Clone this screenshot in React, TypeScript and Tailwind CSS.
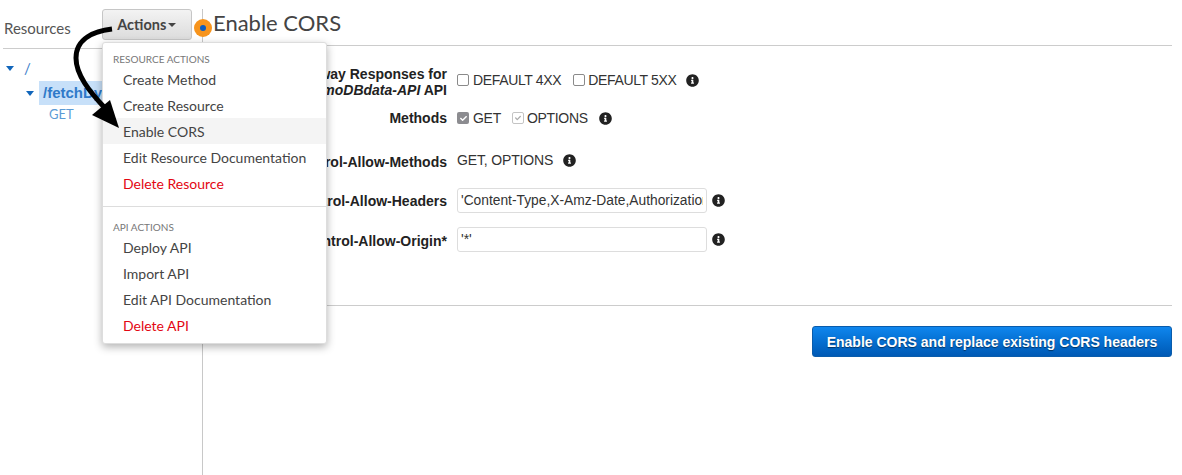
import { FC, ReactNode } from 'react'
import { FaInfoCircle, FaCheck } from 'react-icons/fa'

const helv = 'font-["Liberation_Sans",Arial,sans-serif]'

const Caret: FC = () => (
  <span className="w-0 h-0 border-x-[4.5px] border-x-transparent border-t-[5px] border-t-[#1166bb]" />
)

const Info: FC<{ className: string }> = ({ className }) => (
  <FaInfoCircle className={`text-[#222] w-[13px] h-[13px] shrink-0 ${className}`} />
)

const Box: FC<{ state?: 'off' | 'dark' | 'light'; className?: string }> = ({ state = 'off', className = '' }) => {
  if (state === 'dark') {
    return (
      <span className={`w-[12px] h-[12px] rounded-[2px] bg-[#8c8c90] flex items-center justify-center ${className}`}>
        <FaCheck className="text-white w-[7px] h-[7px]" />
      </span>
    )
  }
  if (state === 'light') {
    return (
      <span className={`w-[12px] h-[12px] rounded-[2px] border border-[#c4c4c4] bg-white flex items-center justify-center ${className}`}>
        <FaCheck className="text-[#aaa] w-[6px] h-[6px]" />
      </span>
    )
  }
  return <span className={`block w-[12px] h-[12px] rounded-[2px] border border-[#8a8a8a] bg-white ${className}`} />
}

type RowProps = {
  label: ReactNode
  className: string
  labelClass?: string
  controlClass?: string
  children: ReactNode
}

const Row: FC<RowProps> = ({ label, className, labelClass = '', controlClass = '', children }) => (
  <div className={`flex items-center ${className}`}>
    <div className={`w-[244px] text-right font-bold text-[14px] leading-[16px] text-[#222] whitespace-nowrap ${labelClass}`}>{label}</div>
    <div className={`ml-[10px] flex items-center text-[14px] text-[#333] ${controlClass}`}>{children}</div>
  </div>
)

const MenuItem: FC<{ text: string; danger?: boolean; active?: boolean }> = ({ text, danger, active }) => (
  <div className={`h-[26px] pl-[20px] flex items-center text-[14px] ${danger ? 'text-[#e30613]' : 'text-[#444]'} ${active ? 'bg-[#f4f4f4]' : ''}`}>
    {text}
  </div>
)

const MenuHead: FC<{ text: string }> = ({ text }) => (
  <div className="h-[16px] pl-[10px] pt-[2px] flex items-center text-[10px] text-[#777]">{text}</div>
)

const App: FC = () => {
  return (
    <div className={`relative w-[1182px] h-[475px] overflow-hidden bg-white flex ${helv}`}>
      <aside className="mt-[9px] w-[203px] h-[466px] shrink-0 border-r border-[#c8c8c8] font-['Lato',sans-serif]">
        <div className="ml-[3px] h-[40px] border-b border-[#ccc] flex items-start">
          <span className="ml-px mt-[10px] text-[15px] leading-[18px] text-[#555]">Resources</span>
          <button className="ml-[31px] w-[90px] h-[31px] rounded-[3px] border border-[#c6c6c6] bg-gradient-to-b from-[#f3f3f3] to-[#dcdcdc] flex items-center justify-center gap-[2px] text-[14.5px] font-bold text-[#444]">
            Actions
            <span className="w-0 h-0 border-x-[4px] border-x-transparent border-t-[4px] border-t-[#444]" />
          </button>
        </div>
        <div className="mt-[11px] pl-[6px] flex items-center h-[16px]">
          <Caret />
          <span className="ml-[10px] text-[15px] text-[#3f7fcb]">/</span>
        </div>
        <div className="mt-[5px] pl-[26px] flex items-center h-[24px]">
          <Caret />
          <span className={`ml-[5px] h-[24px] w-[63px] bg-[#c7e0f9] pl-[4px] flex items-center font-bold text-[15px] text-[#2f7ac9] whitespace-nowrap ${helv}`}>
            /fetchDy
          </span>
        </div>
        <div className="mt-[1px] pl-[49px] text-[13px] leading-[16px] text-[#5b9bd5]">GET</div>
      </aside>

      <main className="flex-1 pr-[10px]">
        <div className="h-[46px] border-b border-[#ccc] pl-[10px] font-['Lato',sans-serif] text-[22px] leading-[46px] text-[#444]">
          Enable CORS
        </div>

        <Row
          className="mt-[20px] h-[32px]"
          controlClass="mb-[4px]"
          label={<>Gateway Responses for<br /><i>DynamoDBdata-API</i> API</>}
        >
          <Box />
          <span className="ml-[4px] tracking-[-0.35px]">DEFAULT 4XX</span>
          <Box className="ml-[12px]" />
          <span className="ml-[3px] tracking-[-0.35px]">DEFAULT 5XX</span>
          <Info className="ml-[10px]" />
        </Row>
        <Row className="mt-[12px] h-[16px]" label="Methods">
          <Box state="dark" />
          <span className="ml-[4px] tracking-[-0.3px]">GET</span>
          <Box state="light" className="ml-[11px]" />
          <span className="ml-[3px] tracking-[-0.3px]">OPTIONS</span>
          <Info className="ml-[11px]" />
        </Row>
        <Row className="mt-[26px] h-[16px]" labelClass="pt-[4px]" label="Access-Control-Allow-Methods">
          <span className="tracking-[-0.15px]">GET, OPTIONS</span>
          <Info className="ml-[10px]" />
        </Row>
        <Row className="mt-[19px] h-[26px]" labelClass="pt-[2px]" label="Access-Control-Allow-Headers">
          <input
            readOnly
            value="'Content-Type,X-Amz-Date,Authorization,X-Api-Key,X-Amz-Security-Token'"
            className="w-[250px] h-[25px] rounded-[3px] border border-[#ddd] px-[3px] text-[13.8px] text-[#333] outline-none"
          />
          <Info className="ml-[5px]" />
        </Row>
        <Row className="mt-[13px] h-[26px]" labelClass="pt-[4px]" label="Access-Control-Allow-Origin*">
          <input
            readOnly
            value="'*'"
            className="w-[250px] h-[25px] rounded-[3px] border border-[#ddd] px-[3px] text-[14px] text-[#333] outline-none"
          />
          <Info className="ml-[5px]" />
        </Row>

        <div className="mt-[53px] border-t border-[#ccc] pt-[20px] flex justify-end">
          <button className="w-[360px] h-[31px] pt-px rounded-[3px] border border-[#0a5cab] bg-gradient-to-b from-[#0f86ee] to-[#0059b5] text-white font-bold text-[14px] [text-shadow:0_1px_1px_rgba(0,0,0,0.5)]">
            Enable CORS and replace existing CORS headers
          </button>
        </div>
      </main>

      {/* dropdown over the page */}
      <div className="absolute left-[102px] top-[42px] w-[225px] h-[302px] bg-white rounded-[3px] border border-[#ddd] shadow-[0_3px_8px_rgba(0,0,0,0.3)] pt-[7px] font-['Lato',sans-serif]">
        <MenuHead text="RESOURCE ACTIONS" />
        <MenuItem text="Create Method" />
        <MenuItem text="Create Resource" />
        <MenuItem text="Enable CORS" active />
        <MenuItem text="Edit Resource Documentation" />
        <MenuItem text="Delete Resource" danger />
        <div className="mt-[10px] border-t border-[#ddd]" />
        <div className="mt-[11px]"><MenuHead text="API ACTIONS" /></div>
        <MenuItem text="Deploy API" />
        <MenuItem text="Import API" />
        <MenuItem text="Edit API Documentation" />
        <MenuItem text="Delete API" danger />
      </div>

      {/* annotation marker */}
      <span className="absolute left-[194px] top-[19px] w-[18px] h-[18px] rounded-full bg-[#f7941d] flex items-center justify-center">
        <span className="w-[6px] h-[6px] rounded-full bg-[#0b5cc0]" />
      </span>

      {/* annotation arrow */}
      <svg className="absolute left-0 top-0 pointer-events-none" width="200" height="140" viewBox="0 0 200 140">
        <path d="M112 29 C95 31 76 38 76 58 C76 75 90 92 104 107" fill="none" stroke="#000" strokeWidth="5" />
        <path d="M119 128 L92 115 L110 100 Z" fill="#000" />
      </svg>
    </div>
  )
}

export default App
